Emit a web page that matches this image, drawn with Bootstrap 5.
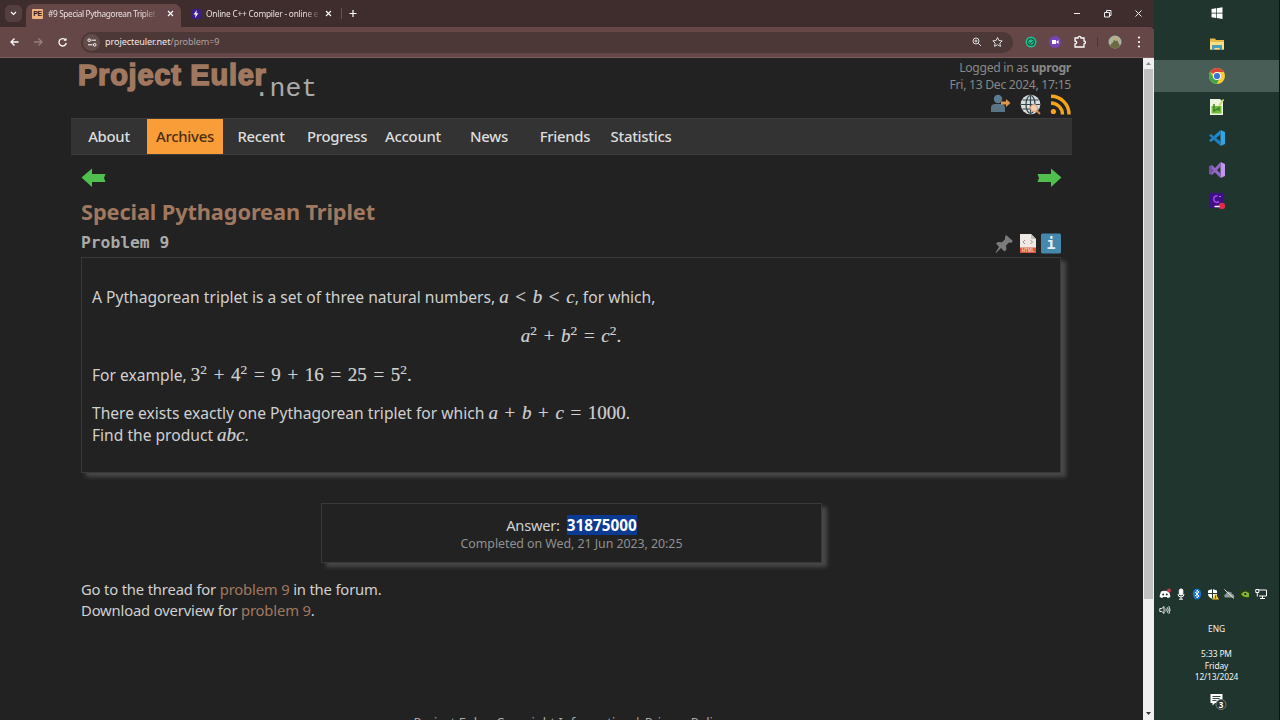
<!DOCTYPE html>
<html lang="en">
<head>
<meta charset="utf-8">
<meta name="viewport" content="width=device-width, initial-scale=1">
<title>#9 Special Pythagorean Triplet - Project Euler</title>
<link href="https://cdn.jsdelivr.net/npm/bootstrap@5.3.0/dist/css/bootstrap.min.css" rel="stylesheet">
<style>
body{width:1280px;height:720px;overflow:hidden;background:#222;color:#d0d0d0;font-family:"Noto Sans",sans-serif;font-size:15.4px;line-height:20px}
svg{display:block;flex:none}
.desktop{height:720px}
.browser{width:1154px;background:#222}
.tabstrip{height:27px;background:#3f2c2c;padding-left:5px;font-size:8.3px;line-height:12px;letter-spacing:-.37px;color:#eadfdf}
.tab-search{width:17px;height:17px;background:#543e3e;border-radius:5px;margin:5px 4px 0 0}
.tab-active{width:155px;height:23px;margin-top:4px;background:#654747;border-radius:7px 7px 0 0;padding:0 7px 4px 6px}
.tab-idle{width:158px;height:19px;margin-top:4px;padding:0 7px 0 10px}
.tab-title{white-space:nowrap}
.fade-end{-webkit-mask-image:linear-gradient(90deg,#000 88%,rgba(0,0,0,.2));mask-image:linear-gradient(90deg,#000 88%,rgba(0,0,0,.2))}
.favicon-pe{width:11px;height:10px;background:#f2b27f;color:#2c1d17;font:bold 7px/10px "Liberation Sans",sans-serif;text-align:center;border-radius:1px}
.toolbar{height:31px;background:#654747;padding:0 11px 0 9px;border-bottom:1px solid #785b5b;border-radius:0 4px 0 0}
.omnibox{width:932px;height:21px;border-radius:11px;background:#4d3838;font-size:9.1px;line-height:12px;letter-spacing:-.09px;padding:0 9px 0 2px;color:#f1e8e8}
.omnibox .path{color:#b29f9f}
.site-chip{width:17px;height:17px;border-radius:50%;background:#634c4c}
.viewport{height:662px;overflow:hidden}
.page-col{width:1000px;margin-left:72px}
.site-head{height:60px}
.logo{padding-left:6px}
.logo-main{font:bold 29px/32px "Liberation Sans",sans-serif;letter-spacing:.75px;color:#a07860;-webkit-text-stroke:1.5px #a07860;padding-top:1px}
.logo-net{font:26.5px/28px "Liberation Mono",monospace;color:#aaa;margin:17px 0 0 -13px}
.who{font-size:12.2px;line-height:16.5px;letter-spacing:-.3px;color:#888;padding:2px 1px 0 0}
.who-icons{gap:9px;padding-top:1px}
.menu{height:37px;background:#333;border:solid #3d3d3d;border-width:1px 0;font-weight:500;font-size:14.9px;letter-spacing:-.28px;color:#ddd;margin-left:-1px}
.menu span{width:76px;height:35px;line-height:35px;text-align:center;white-space:nowrap}
.menu .on{background:#f89d38;color:#4b2d0c}
.inner{padding:0 11px 0 9px}
.inner h2{font-size:21.8px;line-height:32px;height:36px;font-weight:700;letter-spacing:-.13px;color:#a07860;margin:8px 0 0}
.arrows{height:20px;margin-top:13px;margin-right:-1px}
.prob-row{height:25px}
.prob-no{font:bold 16.3px/21px "DejaVu Sans Mono",monospace;color:#aaa}
.prob-icons{gap:4px;padding-top:1px}
.panel-box{border:1px solid #393939;box-shadow:5px 4px 4px #484848}
.statement{height:216px;padding:28px 10px 0;line-height:22px;font-size:15.6px}
.statement>div{height:22px;white-space:nowrap}
.statement .gap-above{margin-top:17px}
.statement .gap-small{margin-top:16px}
.mx{font-family:"Liberation Serif",serif;font-size:19px;line-height:20px;white-space:pre;word-spacing:1.9px;-webkit-text-stroke:.2px #d0d0d0}
.mx sup{font-size:13.5px;top:-.52em;line-height:0}
.answer{width:501px;height:60px;margin:30px 0 0 240px;padding-top:11px;font-size:14.7px;letter-spacing:-.28px}
.hit{background:#0b3a93;color:#fff;font-weight:700;font-size:15.3px;letter-spacing:0}
.done{font-size:12.4px;line-height:18px;letter-spacing:-.05px;color:#909090}
.links{margin-top:16px;line-height:20.7px;font-size:14.8px;letter-spacing:-.17px}
.links a,.links a:hover{color:#a07860;text-decoration:none}
.foot{font-size:12.8px;line-height:17px;color:#aaa;margin-top:94px;padding-right:3px}
.sbar{width:11px;background:#f0f0f0}
.thumb{height:530px;background:#c1c1c1;margin:0 1px}
.taskbar{width:126px;background:#1f352e;color:#f2f5f4;font-size:8.4px;line-height:11.6px;letter-spacing:-.1px;border-right:1px solid #0d1613}
.apps{height:580px;margin-top:-2px}
.app{height:31.2px}
.app.on{background:#485d55}
.tray{gap:4px;padding:0 0 0 5px;margin-top:10px}
.tray svg{width:12px;height:12px}
</style>
</head>
<body>
<div class="desktop d-flex">
<div class="browser d-flex flex-column">
  <div class="tabstrip d-flex">
    <div class="tab-search d-flex align-items-center justify-content-center"><svg width="7" height="5" viewBox="0 0 7 5" fill="none" stroke="#fff" stroke-width="1.2"><path d="M1 1l2.500 2.500L6 1"/></svg></div>
    <div class="tab-active d-flex align-items-center">
      <span class="favicon-pe">PE</span>
      <span class="tab-title fade-end" style="margin-left:5px">#9 Special Pythagorean Triplet</span>
      <svg class="ms-auto" width="7" height="7" viewBox="0 0 7 7" stroke="#fff" stroke-width="1.1"><path d="M1 1l5 5M6 1l-5 5"/></svg>
    </div>
    <div class="tab-idle d-flex align-items-center">
      <svg width="10" height="10" viewBox="0 0 10 10"><rect width="10" height="10" rx="2" fill="#3c1e88"/><path d="M5.800 1L2.600 5.400h2L4 9l3.400-4.700H5.300z" fill="#fff"/></svg>
      <span class="tab-title fade-end" style="margin-left:5px;letter-spacing:-.2px">Online C++ Compiler - online e</span>
      <svg class="ms-auto" width="7" height="7" viewBox="0 0 7 7" stroke="#fff" stroke-width="1.1"><path d="M1 1l5 5M6 1l-5 5"/></svg>
    </div>
    <svg width="30" height="27" viewBox="8 0 30 27" fill="none"><path d="M10.500 8v11" stroke="#6a5050"/><path d="M18.500 13.500h7M22 10v7" stroke="#fff" stroke-width="1.200"/></svg>
    <svg class="ms-auto" width="82" height="27" viewBox="0 0 82 27" fill="none" stroke="#eee"><path d="M2 13.500h6M63.500 10.500l6 6M69.500 10.500l-6 6"/><path d="M32.500 12.500h5v4.500h-5zM34.500 12v-1.500h4.500v5h-1.500"/></svg>
  </div>
  <div class="toolbar d-flex align-items-center">
    <svg width="72" height="16" viewBox="0 0 72 16" fill="none" stroke="#fff" stroke-width="1.300"><path d="M9.500 8H2M5.500 4.500L2 8l3.500 3.500"/><path d="M25 8h8M29.500 4.500L33 8l-3.500 3.500" stroke="#967f7f"/><path d="M56.600 6A3.700 3.700 0 1 0 57.300 9"/><path d="M57.500 3.800v3h-3z" fill="#fff" stroke="none"/></svg>
    <div class="omnibox d-flex align-items-center">
      <span class="site-chip d-flex align-items-center justify-content-center"><svg width="10" height="9" viewBox="0 0 10 9" fill="none" stroke="#fff"><circle cx="2.200" cy="2.200" r="1.300"/><path d="M4.500 2.200H9M1 6.800h4.500"/><circle cx="7.700" cy="6.800" r="1.300"/></svg></span>
      <span class="ms-1" style="padding-left:1px">projecteuler.net<span class="path">/problem=9</span></span>
      <svg class="ms-auto" width="32" height="12" viewBox="1 0 32 12" fill="none" stroke="#ddd"><circle cx="5" cy="5" r="3"/><path d="M7.300 7.300L10 10M3.500 5h3M5 3.500v3"/><path d="M26.500 1.500l1.400 3 3.300.4-2.400 2.200.7 3.300-3-1.700-3 1.700.7-3.300-2.400-2.200 3.300-.4z"/></svg>
    </div>
    <svg class="ms-auto" width="121" height="18" viewBox="0 0 121 18" fill="none"><circle cx="9" cy="9" r="5.500" fill="#25bd8c"/><circle cx="9" cy="9" r="3.300" stroke="#0c4637" stroke-width="1.100"/><path d="M7.500 9.500l1.300 1 2.500-2.500" stroke="#0c4637"/><circle cx="33" cy="9" r="6" fill="#7644b5"/><path d="M30 7h4v4h-4zM34 9l2.500-2v4z" fill="#fff"/><path d="M53 5h3c0-2.200 3-2.200 3 0h3v3c2 0 2 2.800 0 2.800V14h-9v-3c2.200 0 2.200-3 0-3z" stroke="#fff" stroke-width="1.300"/><path d="M75.500 4v10" stroke="#4b3434"/><circle cx="93" cy="9" r="6.500" fill="#a8b4a0"/><path d="M88 13c1-3 3-3 3-4l2-4 2 1 1 3 2 4a6.500 6.500 0 0 1-10 0z" fill="#6b6a45"/><circle cx="94" cy="6" r="2" fill="#caa878"/><g fill="#fff"><circle cx="117" cy="4.500" r="1.100"/><circle cx="117" cy="9" r="1.100"/><circle cx="117" cy="13.500" r="1.100"/></g></svg>
  </div>
  <div class="viewport d-flex">
    <div class="flex-grow-1">
      <div class="page-col">
        <div class="site-head d-flex justify-content-between">
          <div class="logo d-flex text-nowrap"><span class="logo-main">Project Euler</span><span class="logo-net">.net</span></div>
          <div class="who text-end">
            <div>Logged in as <b>uprogr</b></div>
            <div>Fri, 13 Dec 2024, 17:15</div>
            <div class="who-icons d-flex justify-content-end">
              <svg width="22" height="20" viewBox="0 0 22 20"><circle cx="9" cy="5" r="4.200" fill="#5a7c90"/><path d="M2 18v-4q0-4 4-4h6q4 0 4 4v4z" fill="#597585"/><path d="M12 7.500h5V5l4.500 4-4.500 4v-2.500h-5z" fill="#dc964d"/></svg>
              <svg width="21" height="21" viewBox="0 0 21 21"><circle cx="10.500" cy="10.500" r="9.800" fill="#d8dddd"/><g fill="none" stroke="#34434a" stroke-width="1.200"><ellipse cx="10.500" cy="10.500" rx="4.500" ry="9"/><path d="M10.500 1v19M1 10.500h19M2.500 6h16M2.500 15h16"/></g><path d="M16 16l4 4" stroke="#d18a45" stroke-width="2"/><circle cx="14" cy="14" r="3.500" fill="#f2cdb0" stroke="#dca67c"/></svg>
              <svg width="21" height="21" viewBox="0 0 21 21" fill="none" stroke="#f5a51b" stroke-width="3.400"><path d="M1 2.200A18 18 0 0 1 19 20.500M1 9A11.500 11.500 0 0 1 12.500 20.500"/><circle cx="3.400" cy="17.500" r="2.600" fill="#f5a51b" stroke="none"/></svg>
            </div>
          </div>
        </div>
        <div class="menu d-flex"><span>About</span><span class="on">Archives</span><span>Recent</span><span>Progress</span><span>Account</span><span>News</span><span>Friends</span><span>Statistics</span></div>
        <div class="inner">
          <div class="arrows d-flex justify-content-between">
            <svg width="25" height="20" viewBox="0 0 25 20"><path d="M.5 9.500L11 .5v5.500h13.500l-1.500 4 1.500 4H11v5z" fill="#50bf4d"/></svg>
            <svg width="25" height="20" viewBox="0 0 25 20"><path d="M24.500 9.500L14 .5v5.500H.5L2 10l-1.500 4H14v5z" fill="#50bf4d"/></svg>
          </div>
          <h2>Special Pythagorean Triplet</h2>
          <div class="prob-row d-flex justify-content-between">
            <div class="prob-no">Problem 9</div>
            <div class="prob-icons d-flex">
              <svg width="20" height="21" viewBox="1 0 20 21"><path d="M12 2l7 6-2 2-2-.500-3 3 .5 4-2 2-3.500-3.500L2 20l-.500-.500L5 14 2 10.500l2-1.500 4 .3 3-3L11 4z" fill="#7b7b7b"/></svg>
              <svg width="18" height="21" viewBox="0 0 18 21"><path d="M1 1h11l5 5v14H1z" fill="#eee9e4"/><path d="M12 1v5h5z" fill="#c6c0bb"/><path d="M1 14.500h16V20H1z" fill="#da5743"/><path d="M6 7L4 9l2 2M11.500 7l2 2-2 2" stroke="#a5938c" fill="none"/><text x="9" y="19" font-family="Liberation Sans" font-size="4.500" font-weight="bold" text-anchor="middle" fill="#f6c6bb">HTML</text></svg>
              <svg width="20" height="21" viewBox="0 0 20 21"><rect y=".500" width="20" height="20" rx="1.500" fill="#4588ac"/><text x="10" y="16" font-family="DejaVu Sans Mono" font-size="15" font-weight="bold" text-anchor="middle" fill="#e5f0f5">i</text></svg>
            </div>
          </div>
          <div class="panel-box statement">
            <div>A Pythagorean triplet is a set of three natural numbers, <span class="mx"><i>a</i> &lt; <i>b</i> &lt; <i>c</i></span>, for which,</div>
            <div class="gap-above text-center"><span class="mx"><i>a</i><sup>2</sup> + <i>b</i><sup>2</sup> = <i>c</i><sup>2</sup>.</span></div>
            <div class="gap-above">For example, <span class="mx">3<sup>2</sup> + 4<sup>2</sup> = 9 + 16 = 25 = 5<sup>2</sup>.</span></div>
            <div class="gap-small">There exists exactly one Pythagorean triplet for which <span class="mx"><i>a</i> + <i>b</i> + <i>c</i> = 1000</span>.</div>
            <div>Find the product <span class="mx"><i>abc</i></span>.</div>
          </div>
          <div class="panel-box answer text-center">
            <div>Answer:&nbsp; <span class="hit">31875000</span></div>
            <div class="done">Completed on Wed, 21 Jun 2023, 20:25</div>
          </div>
          <div class="links">
            <div>Go to the thread for <a href="#">problem 9</a> in the forum.</div>
            <div>Download overview for <a href="#">problem 9</a>.</div>
          </div>
          <div class="foot text-center">Project Euler: Copyright Information | Privacy Policy</div>
        </div>
      </div>
    </div>
    <div class="sbar d-flex flex-column">
      <svg width="11" height="11" viewBox="0 0 11 11"><path d="M3 7l2.500-3L8 7z" fill="#8a8a8a"/></svg>
      <div class="thumb"></div>
      <svg class="mt-auto" width="11" height="12" viewBox="0 0 11 12"><path d="M3 4l2.500 3L8 4z" fill="#333"/></svg>
    </div>
  </div>
</div>
<div class="taskbar d-flex flex-column">
  <div class="apps">
    <div class="app d-flex align-items-center justify-content-center"><svg width="16" height="18" viewBox="0 0 16 18" fill="#fff"><path d="M2.500 4l4.500-.7v4.500H2.500zM7.700 3.200L13.500 2.300v5.500H7.700zM2.500 8.500H7V13l-4.500-.7zM7.700 8.500h5.800v5.500l-5.800-.9z"/></svg></div>
    <div class="app d-flex align-items-center justify-content-center"><svg width="16" height="18" viewBox="0 0 16 18"><path d="M1 2.500h5l1 1.500h8v9.500H1z" fill="#e9b94a"/><path d="M1 6h14v7.500H1z" fill="#f9df86"/><path d="M3 9h10v5h-2.500v-2h-5v2H3z" fill="#4b9cb8"/></svg></div>
    <div class="app on d-flex align-items-center justify-content-center"><svg width="18" height="18" viewBox="0 0 18 18"><circle cx="9" cy="9" r="8" fill="#f7cb39"/><path d="M9 9L2.100 5A8 8 0 0 1 15.900 5H9z" fill="#d9473a"/><path d="M2.100 5A8 8 0 0 0 8.500 17l3.500-6H9L5.500 11z" fill="#43a54c"/><circle cx="9" cy="9" r="4" fill="#fff"/><circle cx="9" cy="9" r="3.100" fill="#3b73d4"/></svg></div>
    <div class="app d-flex align-items-center justify-content-center"><svg width="18" height="18" viewBox="0 0 18 18"><path d="M2 1h10l3 3v13H2z" fill="#eef5df"/><path d="M3.500 8h10v7.500h-10z" fill="#71bc3d"/><path d="M6 6v7l5-3v3" stroke="#447f2b" fill="none" stroke-width="1.500"/><path d="M15.500 1.500L11 8" stroke="#cfd875" stroke-width="1.800"/></svg></div>
    <div class="app d-flex align-items-center justify-content-center"><svg width="18" height="18" viewBox="0 0 18 18"><path d="M12.500 1L17 3v12l-4.500 2z" fill="#35a4e4"/><path d="M12.500 1v4.500L3 13l-2-1.600z" fill="#2089ca"/><path d="M12.500 17v-4.500L3 5 1 6.600z" fill="#1f7fbd"/></svg></div>
    <div class="app d-flex align-items-center justify-content-center"><svg width="18" height="18" viewBox="0 0 18 18"><path d="M12.500 1L17 3v12l-4.500 2z" fill="#c295ec"/><path d="M12.500 1v4.500L4 14l-3-1.500v-7L4 4l8.500 8.500V17L3.500 8v3z" fill="#9365c4"/><path d="M1 5.500L4 4v10l-3-1.500z" fill="#7b51a6"/></svg></div>
    <div class="app d-flex align-items-center justify-content-center"><svg width="18" height="18" viewBox="0 0 18 18"><rect x="1" y="1" width="15" height="15" rx="1" fill="#3f0f86"/><path d="M9.500 4a3.200 3.200 0 1 0 1.500 5.500" stroke="#9a45e2" stroke-width="1.700" fill="none"/><path d="M11 4.500h2" stroke="#b66cf0"/><circle cx="14" cy="14" r="3.200" fill="#d92e45"/><path d="M6.500 14.500h5" stroke="#fff" stroke-width="1.500"/></svg></div>
  </div>
  <div class="tray d-flex flex-wrap">
    <svg viewBox="0 0 12 12"><path d="M2 3.500q4-1.500 8 0l1.500 5Q10 10 8.500 10L8 9H4l-.5 1Q2 10 .5 8.500z" fill="#fff"/><circle cx="4.200" cy="6.500" r="1" fill="#1f352e"/><circle cx="7.800" cy="6.500" r="1" fill="#1f352e"/><circle cx="10" cy="2.500" r="1.900" fill="#c93c50"/></svg>
    <svg viewBox="0 0 12 12" fill="none" stroke="#fff"><rect x="4.300" y="1" width="3.500" height="6" rx="1.500" fill="#fff"/><path d="M3 6q0 3 3 3t3-3M6 9v2M4 11.200h4"/></svg>
    <svg viewBox="0 0 12 12" fill="none"><ellipse cx="6" cy="6" rx="4.200" ry="5.500" fill="#1874d1"/><path d="M4 4l4 4-2 2V2l2 2-4 4" stroke="#fff" stroke-width=".9"/></svg>
    <svg viewBox="0 0 12 12"><path d="M5.500 1L10 2.500V6q0 3-4.500 5Q1 9 1 6V2.500z" fill="#fff"/><path d="M5.500 1v10M1 5.500h9" stroke="#27352f"/><path d="M8.500 5.500L12 11.500H5z" fill="#f2c62c"/><path d="M8.500 7.500v3" stroke="#443c10" stroke-width=".8"/></svg>
    <svg viewBox="0 0 12 12"><path d="M2 9.500q-2-2.500 1-3.500 1-3.500 4-2 2 0 2 2 3 .5 2 3.500z" fill="#8f9b96"/><path d="M1.500 1.500l9.500 9" stroke="#e6ebe8"/></svg>
    <svg viewBox="0 0 12 12"><rect x="1" y="2" width="10" height="8" fill="#243d16"/><path d="M2 6q3.500-4.500 8-1v4q-5 1-8-3z" fill="#79b51c"/><circle cx="6.300" cy="6" r="1.600" fill="#1a2a10" stroke="#cde39d" stroke-width=".6"/></svg>
    <svg viewBox="0 0 12 12" fill="none" stroke="#fff"><path d="M3.500 2h8v6H4M7.500 8v2.500M5 10.500h5"/><path d="M.8 1.500h3v3h-3zM2.300 4.500v4"/></svg>
    <svg viewBox="0 0 12 12" fill="none" stroke="#fff"><path d="M.8 4.500h2L5 2.500v7L2.800 7.500h-2zM6.800 4.500q1 1.500 0 3M8.300 3.300q2 2.700 0 5.400M9.800 2.200q2.600 3.800 0 7.600" stroke-width=".9"/></svg>
  </div>
  <div class="text-center" style="margin-top:7px">ENG</div>
  <div class="text-center" style="margin-top:13.500px">5:33 PM<br>Friday<br>12/13/2024</div>
  <svg class="mx-auto" width="20" height="20" viewBox="0 0 20 20" style="margin-top:9px"><path d="M3.500 2h12v9H8l-2.500 2.500V11h-2z" fill="#fff"/><path d="M5.500 4.500h8M5.500 6.500h7M5.500 8.500h4" stroke="#1f352e" stroke-width=".9"/><circle cx="14" cy="12.500" r="5" fill="#26342f" stroke="#78827f"/><text x="14" y="15.500" font-family="Noto Sans" font-size="8" font-weight="bold" text-anchor="middle" fill="#fff">3</text></svg>
</div>
</div>
<script src="https://cdn.jsdelivr.net/npm/bootstrap@5.3.0/dist/js/bootstrap.bundle.min.js"></script>
</body>
</html>
